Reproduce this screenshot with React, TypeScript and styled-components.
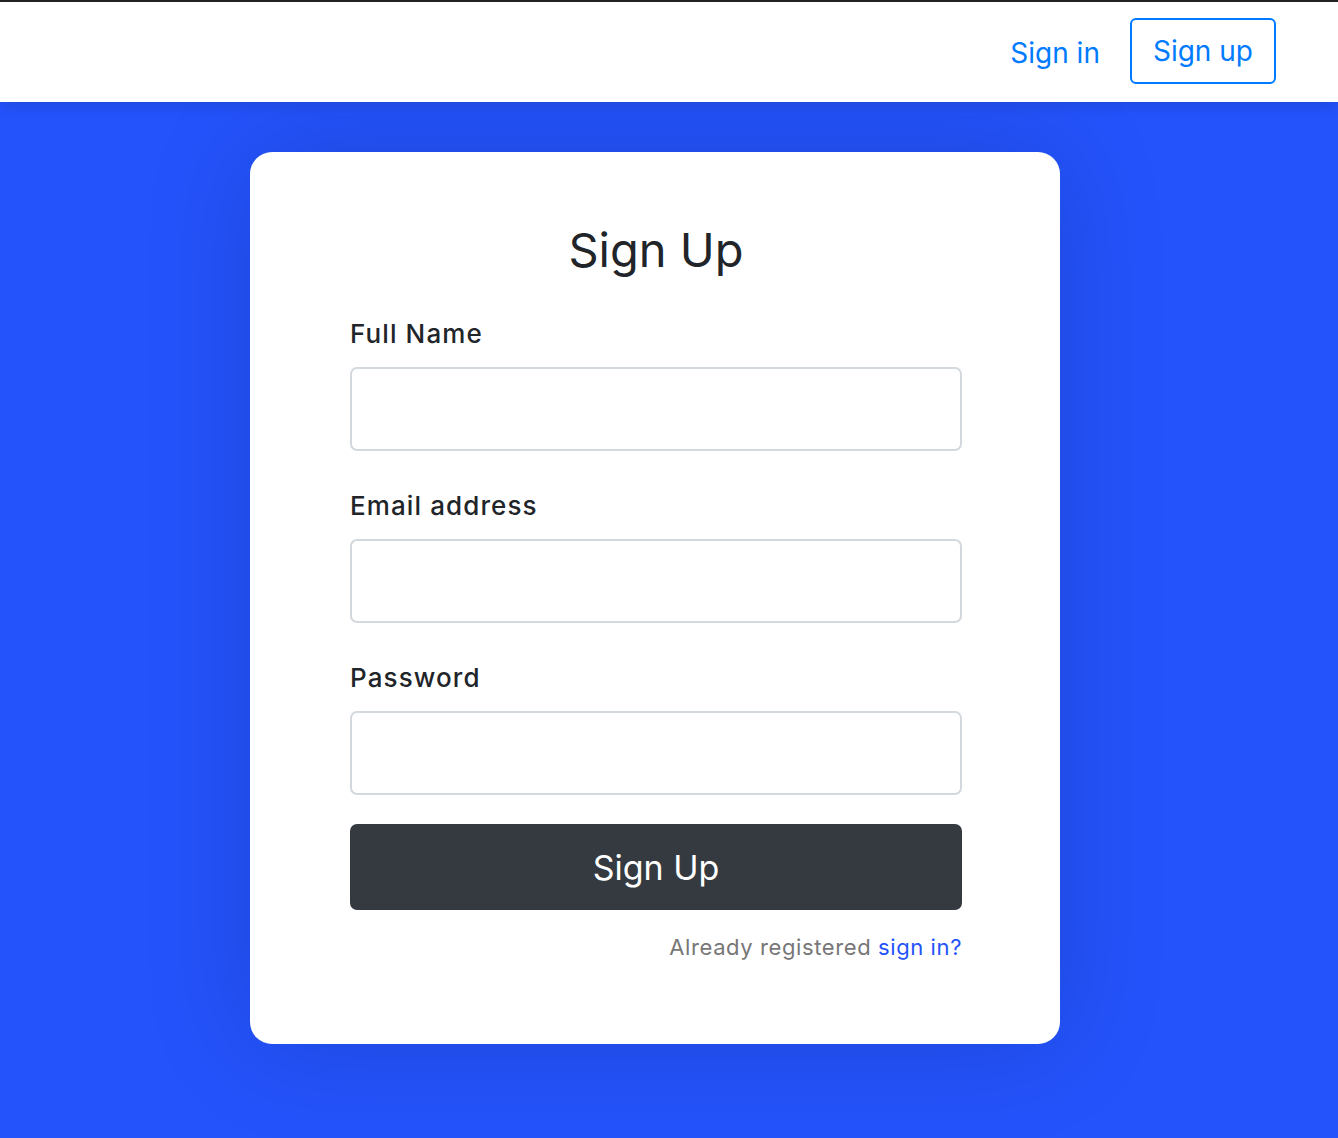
import React from "react";
import styled, { createGlobalStyle } from "styled-components";

const Global = createGlobalStyle`
  html, body { margin: 0; padding: 0; }
  body {
    font-family: Inter, "Noto Sans", "Liberation Sans", sans-serif;
    background: #2453fc;
    color: #212529;
  }
  * { box-sizing: border-box; }
`;

const Page = styled.div`
  min-height: 1138px;
  display: flex;
  flex-direction: column;
  background: #2453fc;
`;

const NavBar = styled.header`
  height: 102px;
  background: #fff;
  border-top: 2px solid #222;
  display: flex;
  align-items: center;
  justify-content: flex-end;
  padding-right: 62px;
  gap: 30px;
  box-shadow: 0 4px 14px rgba(0, 0, 0, 0.12);
  position: relative;
  z-index: 1;
`;

const NavLink = styled.a`
  font-size: 28px;
  color: #007bff;
  text-decoration: none;
  line-height: 1;
  padding-top: 2px;
`;

const NavButton = styled.a`
  height: 66px;
  padding: 0 21px;
  border: 2px solid #007bff;
  border-radius: 6px;
  color: #007bff;
  font-size: 28px;
  display: flex;
  align-items: center;
  text-decoration: none;
  margin-top: -2px;
`;

const Main = styled.main`
  display: flex;
  justify-content: center;
  padding-top: 50px;
  padding-right: 28px;
`;

const Card = styled.form`
  width: 810px;
  background: #fff;
  border-radius: 22px;
  padding: 69px 98px 82px 100px;
  box-shadow: 0 0 110px rgba(0, 0, 20, 0.16);
  display: flex;
  flex-direction: column;
`;

const Title = styled.h3`
  margin: 0 0 37px;
  text-align: center;
  font-size: 47px;
  font-weight: 400;
  line-height: 58px;
  color: #212529;
`;

const Group = styled.div<{ $last?: boolean }>`
  display: flex;
  flex-direction: column;
  margin-bottom: ${(p) => (p.$last ? "29px" : "37px")};
`;

const Label = styled.label`
  font-size: 26px;
  font-weight: 500;
  letter-spacing: 1.1px;
  line-height: 36px;
  margin-bottom: 15px;
  color: #212529;
`;

const Input = styled.input`
  height: 84px;
  width: 100%;
  border: 2px solid #d3d7de;
  border-radius: 7px;
  padding: 0 20px;
  font-size: 24px;
  font-family: inherit;
  outline: none;
`;

const Submit = styled.button`
  height: 86px;
  width: 100%;
  border: none;
  border-radius: 7px;
  background: #343a40;
  color: #fff;
  font-family: inherit;
  font-size: 34px;
  font-weight: 400;
  cursor: pointer;
`;

const Footer = styled.p`
  margin: 22px 0 0 0;
  text-align: right;
  font-size: 22px;
  letter-spacing: 0.6px;
  line-height: 30px;
  color: #777;
`;

const FooterLink = styled.a`
  color: #2453fc;
  text-decoration: none;
`;

export default function App() {
  return (
    <Page>
      <Global />
      <NavBar>
        <NavLink href="#">Sign in</NavLink>
        <NavButton href="#">Sign up</NavButton>
      </NavBar>
      <Main>
        <Card onSubmit={(e) => e.preventDefault()}>
          <Title>Sign Up</Title>
          <Group>
            <Label>Full Name</Label>
            <Input type="text" />
          </Group>
          <Group>
            <Label>Email address</Label>
            <Input type="email" />
          </Group>
          <Group $last>
            <Label>Password</Label>
            <Input type="password" />
          </Group>
          <Submit type="submit">Sign Up</Submit>
          <Footer>
            Already registered <FooterLink href="#">sign in?</FooterLink>
          </Footer>
        </Card>
      </Main>
    </Page>
  );
}
